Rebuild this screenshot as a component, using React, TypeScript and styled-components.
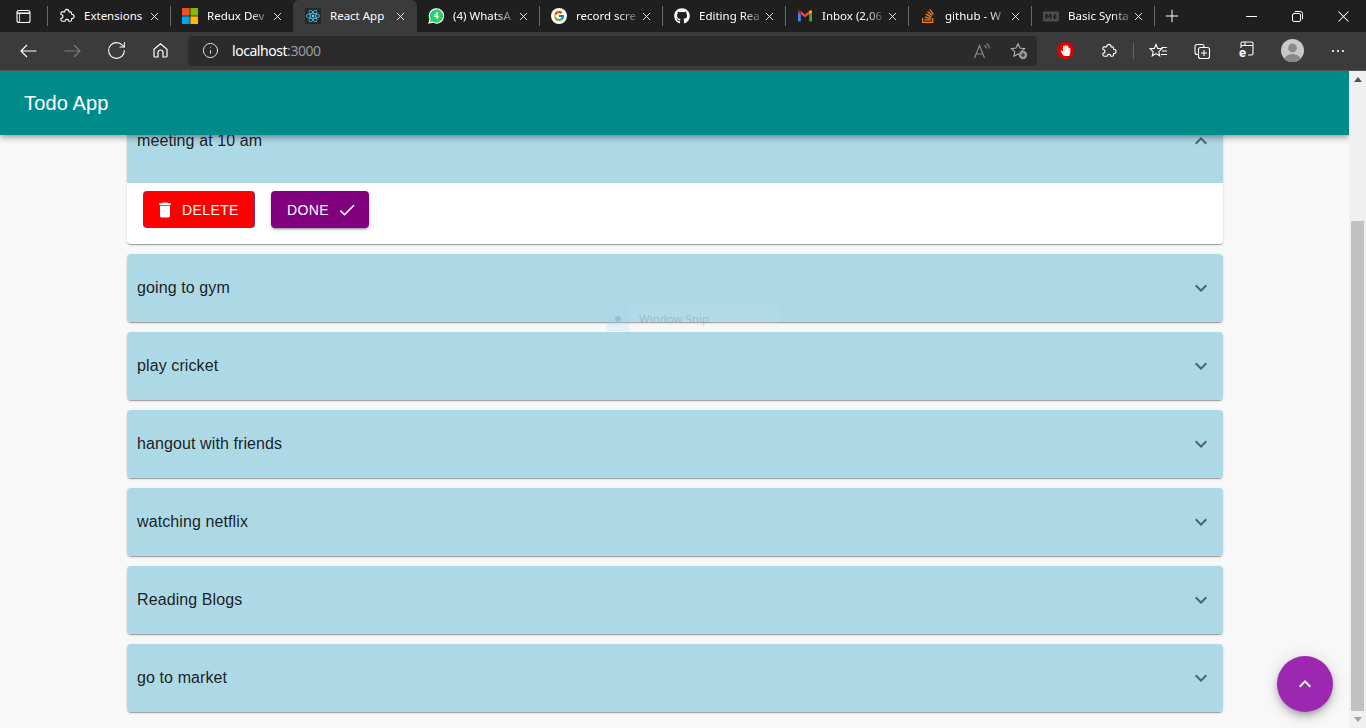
import React from 'react';
import styled, { createGlobalStyle } from 'styled-components';
import { Info, Plus, RotateCw, X } from 'lucide-react';
import { FaGithub, FaHandPaper, FaMarkdown, FaReact, FaStackOverflow } from 'react-icons/fa';
import { FcGoogle } from 'react-icons/fc';
import { MdCheck, MdDelete, MdExpandLess, MdExpandMore, MdKeyboardArrowUp } from 'react-icons/md';

const GlobalStyle = createGlobalStyle`
    html, body {
        margin: 0;
        height: 100%;
        overflow: hidden;
    }
    body {
        font-family: "Liberation Sans", Arial, sans-serif;
    }
`;

const Page = styled.div`
    position: relative;
    display: flex;
    flex-direction: column;
    height: 728px;
    background: #f8f8f8;
`;

const TabStrip = styled.div`
    display: flex;
    height: 32px;
    flex-shrink: 0;
    background: #1f1f1f;
    color: #fff;
    font-family: "Noto Sans", sans-serif;
    font-size: 11.5px;
`;
const SideButton = styled.div`
    display: flex;
    align-items: center;
    justify-content: center;
    width: 47px;
`;
const Divider = styled.div<{ $hidden?: boolean }>`
    align-self: center;
    width: 1px;
    height: 20px;
    background: ${(props) => (props.$hidden ? 'transparent' : '#6a6a6a')};
`;
const Tab = styled.div<{ $active?: boolean }>`
    display: flex;
    align-items: center;
    box-sizing: border-box;
    width: ${(props) => (props.$active ? '124px' : '122px')};
    margin: ${(props) => (props.$active ? '0 -1px' : '0')};
    padding: ${(props) => (props.$active ? '0 9px 0 12px' : '0 8px 0 11px')};
    background: ${(props) => (props.$active ? '#3b3b3b' : 'transparent')};
    border-radius: 6px 6px 0 0;
`;
const TabIcon = styled.span`
    display: flex;
    align-items: center;
    justify-content: center;
    flex-shrink: 0;
    width: 16px;
    height: 16px;
    margin-right: 9px;
`;
const TabTitle = styled.span<{ $fade?: boolean }>`
    flex: 1;
    padding-bottom: 2px;
    white-space: nowrap;
    mask-image: ${(props) => (props.$fade ? 'linear-gradient(to right, #000 72%, rgba(0, 0, 0, 0.25) 100%)' : 'none')};
`;
const TabClose = styled.span`
    display: flex;
    align-items: center;
    justify-content: center;
    flex-shrink: 0;
    width: 16px;
    margin-left: 2px;
`;
const NewTab = styled.div`
    display: flex;
    align-items: center;
    justify-content: center;
    width: 34px;
`;
const WindowControls = styled.div`
    display: flex;
    margin-left: auto;
`;
const WindowControl = styled.div`
    display: flex;
    align-items: center;
    justify-content: center;
    width: 46px;
`;

const Toolbar = styled.div`
    display: flex;
    align-items: center;
    box-sizing: border-box;
    height: 39px;
    flex-shrink: 0;
    padding: 0 6px 1px;
    background: #3b3b3b;
    border-bottom: 1px solid #555;
    color: #fff;
`;
const ToolButton = styled.div<{ $gap?: boolean }>`
    display: flex;
    align-items: center;
    justify-content: center;
    flex-shrink: 0;
    width: 44px;
    margin-left: ${(props) => (props.$gap ? '2px' : '0')};
`;
const ToolDivider = styled.div`
    width: 1px;
    height: 16px;
    margin: 0 2px;
    background: #666;
`;
const AddressBar = styled.div`
    display: flex;
    align-items: center;
    flex: 1;
    height: 30px;
    margin: 0 6px;
    padding: 0 0 0 14px;
    background: #2b2b2b;
    border-radius: 4px;
    font-family: "Noto Sans", sans-serif;
    font-size: 14px;
`;
const Url = styled.span`
    flex: 1;
    margin-left: 13px;
    letter-spacing: -0.45px;
`;
const UrlPort = styled.span`
    color: #9a9a9a;
`;
const AddressAction = styled.span`
    display: flex;
    align-items: center;
    justify-content: center;
    width: 37px;
`;
const StopBadge = styled.span`
    display: flex;
    align-items: center;
    justify-content: center;
    width: 17px;
    height: 17px;
    border-radius: 50%;
    background: #e00000;
    color: #fff;
`;
const Avatar = styled.span`
    display: block;
    width: 23px;
    height: 23px;
    border-radius: 50%;
    overflow: hidden;
`;

const Viewport = styled.div`
    display: flex;
    flex: 1;
    min-height: 0;
`;
const Main = styled.div`
    display: flex;
    flex-direction: column;
    flex: 1;
    min-width: 0;
    overflow: hidden;
`;
const AppBar = styled.header`
    position: relative;
    z-index: 2;
    display: flex;
    align-items: center;
    height: 64px;
    flex-shrink: 0;
    padding: 0 24px;
    background: #008b8b;
    box-shadow: 0 2px 4px -1px rgba(0, 0, 0, 0.2), 0 4px 5px 0 rgba(0, 0, 0, 0.14), 0 1px 10px 0 rgba(0, 0, 0, 0.12);
`;
const AppTitle = styled.h1`
    margin: 0;
    color: #fff;
    font-size: 20px;
    font-weight: 500;
    line-height: 1.6;
    letter-spacing: 0.15px;
`;
const TodoList = styled.div`
    display: flex;
    flex-direction: column;
    gap: 10px;
    width: 1096px;
    margin: -29px 0 0 127px;
`;
const TodoCard = styled.div`
    background: #fff;
    border-radius: 4px;
    box-shadow: 0 2px 1px -1px rgba(0, 0, 0, 0.2), 0 1px 1px 0 rgba(0, 0, 0, 0.14), 0 1px 3px 0 rgba(0, 0, 0, 0.12);
    overflow: hidden;
`;
const TodoHeader = styled.div<{ $expanded?: boolean }>`
    display: flex;
    align-items: center;
    justify-content: space-between;
    padding: ${(props) => (props.$expanded ? '23px 10px 30px' : '22px 10px')};
    background: #add8e6;
    color: rgba(0, 0, 0, 0.87);
    font-size: 16px;
    line-height: 24px;
    letter-spacing: 0.1px;
    svg {
        color: rgba(0, 0, 0, 0.54);
        display: block;
    }
`;
const TodoActions = styled.div`
    display: flex;
    gap: 16px;
    padding: 8px 16px 16px;
`;
const ActionButton = styled.button<{ $color: string; $outlined?: boolean; $iconFirst?: boolean }>`
    display: flex;
    align-items: center;
    gap: ${(props) => (props.$iconFirst ? '7px' : '8px')};
    box-sizing: border-box;
    height: 37px;
    padding: ${(props) => (props.$iconFirst ? '0 15px 0 11px' : '0 12px 0 16px')};
    border: ${(props) => (props.$outlined ? '1px solid rgba(96, 60, 130, 0.75)' : 'none')};
    border-radius: 4px;
    background: ${(props) => props.$color};
    color: #fff;
    font-family: "Liberation Sans", Arial, sans-serif;
    font-size: 14px;
    font-weight: 400;
    letter-spacing: 0.4px;
    box-shadow: ${(props) =>
        props.$outlined
            ? 'none'
            : '0 3px 1px -2px rgba(0, 0, 0, 0.2), 0 2px 2px 0 rgba(0, 0, 0, 0.14), 0 1px 5px 0 rgba(0, 0, 0, 0.12)'};
`;

const Scrollbar = styled.div`
    display: flex;
    flex-direction: column;
    align-items: center;
    width: 17px;
    flex-shrink: 0;
    background: #f0f0f0;
`;
const ScrollTrack = styled.div`
    flex: 1;
    width: 100%;
    padding-top: 139px;
    box-sizing: border-box;
    display: flex;
    justify-content: center;
`;
const ScrollThumb = styled.div`
    width: 13px;
    height: 490px;
    background: #c1c1c1;
`;
const ScrollArrow = styled.div<{ $down?: boolean }>`
    flex-shrink: 0;
    width: 0;
    height: 0;
    margin: ${(props) => (props.$down ? '6px 0 6px' : '6px 0 0')};
    border-left: 4px solid transparent;
    border-right: 4px solid transparent;
    border-bottom: ${(props) => (props.$down ? '0' : '5px solid #505050')};
    border-top: ${(props) => (props.$down ? '5px solid #a3a3a3' : '0')};
`;

const Fab = styled.button`
    position: absolute;
    right: 33px;
    bottom: 16px;
    z-index: 3;
    display: flex;
    align-items: center;
    justify-content: center;
    width: 56px;
    height: 56px;
    padding: 0;
    border: none;
    border-radius: 50%;
    background: #9c27b0;
    color: #fff;
    box-shadow: 0 3px 5px -1px rgba(0, 0, 0, 0.2), 0 6px 10px 0 rgba(0, 0, 0, 0.14), 0 1px 18px 0 rgba(0, 0, 0, 0.12);
`;
const SnipHint = styled.div`
    position: absolute;
    left: 607px;
    top: 306px;
    z-index: 1;
    display: flex;
    align-items: center;
    gap: 10px;
    width: 173px;
    height: 25px;
    background: rgba(235, 240, 255, 0.07);
    color: rgba(80, 100, 120, 0.25);
    font-family: "Noto Sans", sans-serif;
    font-size: 11.5px;
`;
const SnipIcon = styled.span`
    display: flex;
    align-items: center;
    justify-content: center;
    width: 22px;
    height: 25px;
    background: rgba(150, 205, 245, 0.18);
    &::after {
        content: '';
        width: 6px;
        height: 6px;
        border-radius: 50%;
        background: rgba(80, 120, 150, 0.25);
    }
`;

const PanelIcon = () => (
    <svg width="15" height="15" viewBox="0 0 15 15" fill="none" stroke="#fff" strokeWidth="1.1">
        <rect x="1" y="1.5" width="13" height="12" rx="2" />
        <path d="M1 4.2h13" strokeWidth="1.5" />
        <path d="M3.6 4.2v9" strokeWidth="0.8" />
    </svg>
);

// edge draws its own puzzle piece, rounder than the lucide one
const PuzzleIcon = () => (
    <svg width="16" height="16" viewBox="0 0 17 16" fill="none" stroke="#fff" strokeWidth="1.15" strokeLinejoin="round">
        <path d="M6 3.6C6 2 7 1 8.3 1s2.3 1 2.3 2.6H12q1.4 0 1.4 1.4v1.2c1.6 0 2.6 1 2.6 2.2s-1 2.2-2.6 2.2V12q0 1.6-1.4 1.6h-1.6c0-1.2-.8-2-2-2s-2 .8-2 2H4q-2 0-2-1.6v-1.6c1.4 0 2.2-.8 2.2-2s-.8-2-2.2-2V5q0-1.4 1.4-1.4z" />
    </svg>
);

const WindowsLogo = () => (
    <svg width="16" height="16" viewBox="0 0 16 16">
        <rect width="7.6" height="7.6" fill="#f25022" />
        <rect x="8.4" width="7.6" height="7.6" fill="#7fba00" />
        <rect y="8.4" width="7.6" height="7.6" fill="#00a4ef" />
        <rect x="8.4" y="8.4" width="7.6" height="7.6" fill="#ffb900" />
    </svg>
);

const ReactLogo = () => (
    <svg width="16" height="16" viewBox="0 0 16 16">
        <rect width="16" height="16" rx="2" fill="#20292e" />
        <foreignObject x="1" y="1" width="14" height="14">
            <FaReact size={14} color="#61dafb" />
        </foreignObject>
    </svg>
);

const WhatsappLogo = () => (
    <svg width="16" height="16" viewBox="0 0 17 17">
        <path d="M1 16l1.2-4.2A7.6 7.6 0 1 1 5.2 15z" fill="#25d366" stroke="#fff" strokeWidth="1.2" />
        <text x="8.6" y="11.6" textAnchor="middle" fontSize="9" fontWeight="700" fill="#fff" fontFamily="Roboto, sans-serif">
            4
        </text>
    </svg>
);

const GoogleLogo = () => (
    <svg width="16" height="16" viewBox="0 0 16 16">
        <circle cx="8" cy="8" r="8" fill="#fff" />
        <foreignObject x="2" y="2" width="12" height="12">
            <FcGoogle size={12} />
        </foreignObject>
    </svg>
);

const GmailLogo = () => (
    <svg width="16" height="16" viewBox="0 0 16 16">
        <path d="M1 13.5V4l2.8 2v7.5H2a1 1 0 0 1-1-1z" fill="#4285f4" />
        <path d="M15 13.5V4l-2.8 2v7.5H14a1 1 0 0 0 1-1z" fill="#34a853" />
        <path d="M3.8 6.2 8 9.4l4.2-3.2V3L8 6.2 3.8 3z" fill="#ea4335" />
        <path d="M1 4.6V3.4c0-1 1.2-1.5 2-.9l.8.5v3.2z" fill="#c5221f" />
        <path d="M15 4.6V3.4c0-1-1.2-1.5-2-.9l-.8.5v3.2z" fill="#fbbc04" />
    </svg>
);

const NavArrow: React.FC<{ flip?: boolean; color?: string }> = ({ flip, color = '#fff' }) => (
    <svg width="17" height="14" viewBox="0 0 17 14" fill="none" stroke={color} strokeWidth="1.2" style={flip ? { transform: 'scaleX(-1)' } : undefined}>
        <path d="M16.5 7H1M7 1 1 7l6 6" />
    </svg>
);

const MinimizeIcon = () => (
    <svg width="11" height="11" viewBox="0 0 11 11" stroke="#fff" strokeWidth="1">
        <path d="M0 5.5h11" />
    </svg>
);

const RestoreIcon = () => (
    <svg width="11" height="11" viewBox="0 0 11 11" fill="none" stroke="#fff" strokeWidth="1">
        <rect x="0.5" y="2.5" width="8" height="8" rx="1.5" />
        <path d="M2.8.5H8.5a2 2 0 0 1 2 2v5.7" />
    </svg>
);

const CloseIcon = () => (
    <svg width="11" height="11" viewBox="0 0 11 11" stroke="#fff" strokeWidth="1.05">
        <path d="M.5.5l10 10M10.5.5l-10 10" />
    </svg>
);

const ReadAloudIcon = () => (
    <svg width="18" height="18" viewBox="0 0 18 18" fill="none" stroke="#8f8f8f" strokeWidth="1.1">
        <path d="M1.5 16 6.5 3.5 11.5 16M3.2 12h6.6" />
        <path d="M11.5 3.5c1.2.8 1.8 1.8 1.9 3M13.6 1.5c1.8 1.2 2.7 2.9 2.8 5" />
    </svg>
);

const FavoriteAddIcon = () => (
    <svg width="18" height="18" viewBox="0 0 18 18" fill="none">
        <path d="M8 1.8l2 4.3 4.6.5-3.4 3.1.9 4.6L8 12l-4.1 2.3.9-4.6L1.4 6.6 6 6.1z" stroke="#b0b0b0" strokeWidth="1.1" />
        <circle cx="13" cy="13" r="4.2" fill="#9a9a9a" />
        <path d="M13 10.8v4.4M10.8 13h4.4" stroke="#2b2b2b" strokeWidth="1.1" />
    </svg>
);

const FavoritesIcon = () => (
    <svg width="19" height="18" viewBox="0 0 19 18" fill="none" stroke="#fff" strokeWidth="1.1">
        <path d="M7 2.5l1.7 3.9 4.2.4-3.1 2.8.9 4.2L7 11.6l-3.7 2.2.9-4.2L1.1 6.8l4.2-.4z" />
        <path d="M12.5 5.5H18M13 9h5M12 12.5h6" />
    </svg>
);

const CollectionsIcon = () => (
    <svg width="18" height="18" viewBox="0 0 18 18" fill="none" stroke="#fff" strokeWidth="1.1">
        <path d="M5 12.5H4a2 2 0 0 1-2-2V4.5a2 2 0 0 1 2-2h5a2 2 0 0 1 2 2v1" />
        <rect x="5.5" y="5.5" width="11" height="11" rx="2" />
        <path d="M11 8v6M8 11h6" />
    </svg>
);

const IeModeIcon = () => (
    <svg width="19" height="22" viewBox="0 0 19 22" fill="none" stroke="#fff" strokeWidth="1.1">
        <path d="M4 8V3.5a1.5 1.5 0 0 1 1.5-1.5h9A1.5 1.5 0 0 1 16 3.5v10a1.5 1.5 0 0 1-1.5 1.5H11" />
        <path d="M4 5.5h12M8 2v3.5" />
        <text x="2" y="17" fontSize="13" fontWeight="700" fill="#fff" stroke="#3b3b3b" strokeWidth="1.4" paintOrder="stroke" fontFamily="Roboto, sans-serif">
            e
        </text>
    </svg>
);

const AvatarArt = () => (
    <svg width="23" height="23" viewBox="0 0 23 23">
        <rect width="23" height="23" fill="#c9c9c9" />
        <circle cx="11.5" cy="9" r="4.4" fill="#8a8a8a" />
        <ellipse cx="11.5" cy="21" rx="8.5" ry="6" fill="#8a8a8a" />
    </svg>
);

interface BrowserTab {
    title: string;
    icon: React.ReactNode;
    active?: boolean;
    fade?: boolean;
}

const tabs: BrowserTab[] = [
    { title: 'Extensions', icon: <PuzzleIcon /> },
    { title: 'Redux Dev', icon: <WindowsLogo />, fade: true },
    { title: 'React App', icon: <ReactLogo />, active: true },
    { title: '(4) WhatsA', icon: <WhatsappLogo />, fade: true },
    { title: 'record scre', icon: <GoogleLogo />, fade: true },
    { title: 'Editing Rea', icon: <FaGithub size={16} color="#fff" />, fade: true },
    { title: 'Inbox (2,06', icon: <GmailLogo />, fade: true },
    { title: 'github - W', icon: <FaStackOverflow size={16} color="#f48024" />, fade: true },
    { title: 'Basic Synta', icon: <FaMarkdown size={17} color="#4c4c4c" />, fade: true },
];

// dividers sit between tabs, none next to the active one
const hideDivider = (index: number) => tabs[index]?.active || tabs[index - 1]?.active;

const todos = ['going to gym', 'play cricket', 'hangout with friends', 'watching netflix', 'Reading Blogs', 'go to market'];

const App: React.FC = () => (
    <Page>
        <GlobalStyle />
        <TabStrip>
            <SideButton>
                <PanelIcon />
            </SideButton>
            {tabs.map((tab, index) => (
                <React.Fragment key={tab.title}>
                    <Divider $hidden={hideDivider(index)} />
                    <Tab $active={tab.active}>
                        <TabIcon>{tab.icon}</TabIcon>
                        <TabTitle $fade={tab.fade}>{tab.title}</TabTitle>
                        <TabClose>
                            <X size={13} strokeWidth={1.6} />
                        </TabClose>
                    </Tab>
                </React.Fragment>
            ))}
            <Divider />
            <NewTab>
                <Plus size={20} strokeWidth={1.2} />
            </NewTab>
            <WindowControls>
                <WindowControl>
                    <MinimizeIcon />
                </WindowControl>
                <WindowControl>
                    <RestoreIcon />
                </WindowControl>
                <WindowControl>
                    <CloseIcon />
                </WindowControl>
            </WindowControls>
        </TabStrip>
        <Toolbar>
            <ToolButton>
                <NavArrow />
            </ToolButton>
            <ToolButton>
                <NavArrow flip color="#7a7a7a" />
            </ToolButton>
            <ToolButton>
                <RotateCw size={21} strokeWidth={1.2} />
            </ToolButton>
            <ToolButton>
                <svg width="17" height="17" viewBox="0 0 17 17" fill="none" stroke="#fff" strokeWidth="1.2">
                    <path d="M2 7.2 8.5 1.8 15 7.2V14a1 1 0 0 1-1 1h-3V10.5a2.5 2.5 0 0 0-5 0V15H3a1 1 0 0 1-1-1z" />
                </svg>
            </ToolButton>
            <AddressBar>
                <Info size={17} strokeWidth={1.2} />
                <Url>
                    localhost<UrlPort>:3000</UrlPort>
                </Url>
                <AddressAction>
                    <ReadAloudIcon />
                </AddressAction>
                <AddressAction>
                    <FavoriteAddIcon />
                </AddressAction>
            </AddressBar>
            <ToolButton>
                <StopBadge>
                    <FaHandPaper size={11} />
                </StopBadge>
            </ToolButton>
            <ToolButton>
                <PuzzleIcon />
            </ToolButton>
            <ToolDivider />
            <ToolButton>
                <FavoritesIcon />
            </ToolButton>
            <ToolButton>
                <CollectionsIcon />
            </ToolButton>
            <ToolButton>
                <IeModeIcon />
            </ToolButton>
            <ToolButton $gap>
                <Avatar>
                    <AvatarArt />
                </Avatar>
            </ToolButton>
            <ToolButton $gap>
                <svg width="14" height="4" viewBox="0 0 14 4" fill="#fff">
                    <circle cx="2" cy="2" r="1.1" />
                    <circle cx="7" cy="2" r="1.1" />
                    <circle cx="12" cy="2" r="1.1" />
                </svg>
            </ToolButton>
        </Toolbar>
        <Viewport>
            <Main>
                <AppBar>
                    <AppTitle>Todo App</AppTitle>
                </AppBar>
                <TodoList>
                    <TodoCard>
                        <TodoHeader $expanded>
                            meeting at 10 am
                            <MdExpandLess size={24} />
                        </TodoHeader>
                        <TodoActions>
                            <ActionButton $color="#ff0000" $outlined $iconFirst>
                                <MdDelete size={20} />
                                DELETE
                            </ActionButton>
                            <ActionButton $color="#800080">
                                DONE
                                <MdCheck size={20} />
                            </ActionButton>
                        </TodoActions>
                    </TodoCard>
                    {todos.map((todo) => (
                        <TodoCard key={todo}>
                            <TodoHeader>
                                {todo}
                                <MdExpandMore size={24} />
                            </TodoHeader>
                        </TodoCard>
                    ))}
                </TodoList>
            </Main>
            <Scrollbar>
                <ScrollArrow />
                <ScrollTrack>
                    <ScrollThumb />
                </ScrollTrack>
                <ScrollArrow $down />
            </Scrollbar>
        </Viewport>
        <SnipHint>
            <SnipIcon />
            Window Snip
        </SnipHint>
        <Fab>
            <MdKeyboardArrowUp size={24} />
        </Fab>
    </Page>
);

export default App;
